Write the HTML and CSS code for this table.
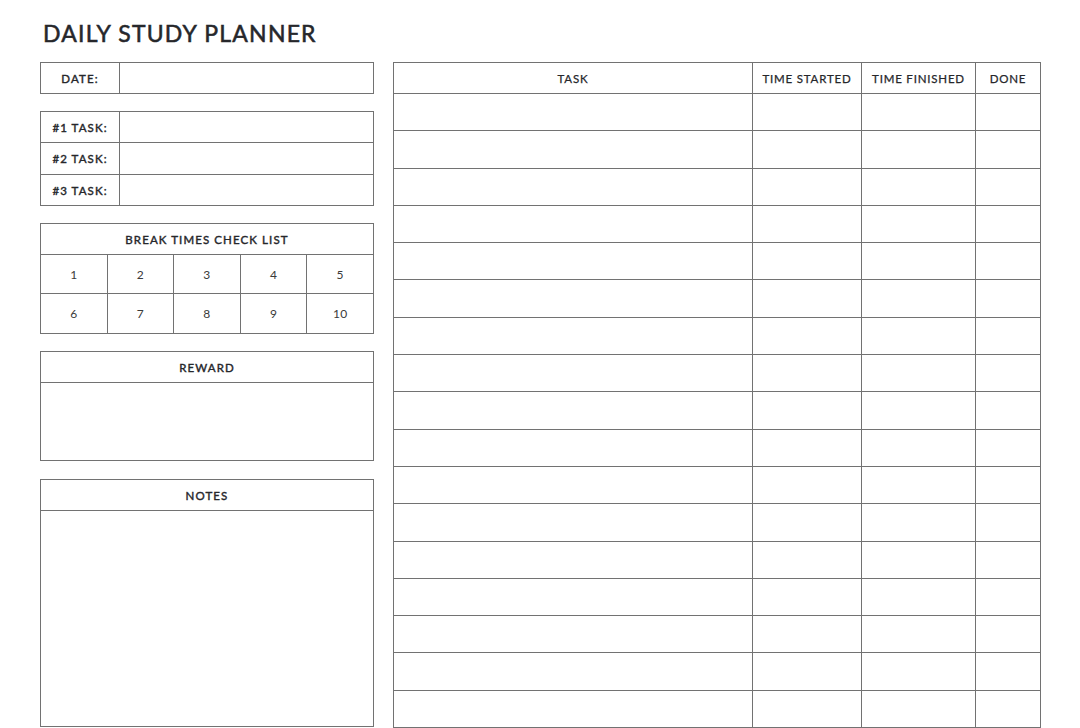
FILE: index.html
```html
<!DOCTYPE html>
<html>
<head>
<meta charset="utf-8">
<link rel="stylesheet" href="styles.css">
</head>
<body>
<div class="page">
  <div class="left">
    <h1 class="title">DAILY STUDY PLANNER</h1>
    <div class="grid date-box">
      <div class="cell label">DATE:</div>
      <div class="cell"></div>
    </div>
    <div class="grid tasks-box">
      <div class="cell label">#1 TASK:</div><div class="cell"></div>
      <div class="cell label">#2 TASK:</div><div class="cell"></div>
      <div class="cell label">#3 TASK:</div><div class="cell"></div>
    </div>
    <div class="grid break-box">
      <div class="cell label span5">BREAK TIMES CHECK LIST</div>
      <div class="cell num">1</div><div class="cell num">2</div><div class="cell num">3</div><div class="cell num">4</div><div class="cell num">5</div>
      <div class="cell num">6</div><div class="cell num">7</div><div class="cell num">8</div><div class="cell num">9</div><div class="cell num">10</div>
    </div>
    <div class="grid reward-box">
      <div class="cell label">REWARD</div>
      <div class="cell"></div>
    </div>
    <div class="grid notes-box">
      <div class="cell label">NOTES</div>
      <div class="cell"></div>
    </div>
  </div>
  <div class="grid main-table">
    <div class="cell label">TASK</div><div class="cell label">TIME STARTED</div><div class="cell label">TIME FINISHED</div><div class="cell label">DONE</div>
    <div class="cell"></div><div class="cell"></div><div class="cell"></div><div class="cell"></div>
    <div class="cell"></div><div class="cell"></div><div class="cell"></div><div class="cell"></div>
    <div class="cell"></div><div class="cell"></div><div class="cell"></div><div class="cell"></div>
    <div class="cell"></div><div class="cell"></div><div class="cell"></div><div class="cell"></div>
    <div class="cell"></div><div class="cell"></div><div class="cell"></div><div class="cell"></div>
    <div class="cell"></div><div class="cell"></div><div class="cell"></div><div class="cell"></div>
    <div class="cell"></div><div class="cell"></div><div class="cell"></div><div class="cell"></div>
    <div class="cell"></div><div class="cell"></div><div class="cell"></div><div class="cell"></div>
    <div class="cell"></div><div class="cell"></div><div class="cell"></div><div class="cell"></div>
    <div class="cell"></div><div class="cell"></div><div class="cell"></div><div class="cell"></div>
    <div class="cell"></div><div class="cell"></div><div class="cell"></div><div class="cell"></div>
    <div class="cell"></div><div class="cell"></div><div class="cell"></div><div class="cell"></div>
    <div class="cell"></div><div class="cell"></div><div class="cell"></div><div class="cell"></div>
    <div class="cell"></div><div class="cell"></div><div class="cell"></div><div class="cell"></div>
    <div class="cell"></div><div class="cell"></div><div class="cell"></div><div class="cell"></div>
    <div class="cell"></div><div class="cell"></div><div class="cell"></div><div class="cell"></div>
    <div class="cell"></div><div class="cell"></div><div class="cell"></div><div class="cell"></div>
  </div>
</div>
</body>
</html>
```
FILE: styles.css
```css
html, body {
  margin: 0;
  padding: 0;
  background: #fff;
  overflow: hidden;
}
body {
  font-family: "Lato", "Liberation Sans", sans-serif;
  color: #26272b;
}
.page {
  display: flex;
  align-items: flex-start;
  gap: 19px;
  padding-left: 40px;
  height: 728px;
}
.left {
  display: flex;
  flex-direction: column;
  gap: 17px;
  width: 334px;
}
.title {
  margin: 0;
  height: 46px;
  padding: 19px 0 0 3px;
  box-sizing: border-box;
  font-size: 23px;
  font-weight: 400;
  -webkit-text-stroke: 0.55px #26272b;
  letter-spacing: 1.2px;
  line-height: 28px;
  color: #26272b;
  margin-bottom: -1px;
}
.grid {
  display: grid;
  background: #727272;
  padding: 1px;
  gap: 1px;
  box-sizing: border-box;
}
.cell {
  background: #fff;
  display: flex;
  align-items: center;
  justify-content: center;
}
.label {
  font-size: 11.5px;
  font-weight: 400;
  -webkit-text-stroke: 0.4px #26272b;
  letter-spacing: 1.1px;
  color: #26272b;
}
.num {
  font-size: 12px;
  font-weight: 400;
  color: #3a3a3a;
  letter-spacing: 0.3px;
}
.date-box {
  grid-template-columns: 78px 1fr;
  grid-template-rows: 30px;
}
.tasks-box {
  grid-template-columns: 78px 1fr;
  grid-template-rows: 30px 31px 30px;
}
.break-box {
  grid-template-columns: repeat(5, 1fr);
  grid-template-rows: 30px 38px 39px;
}
.span5 {
  grid-column: span 5;
}
.reward-box {
  grid-template-rows: 30px 77px;
}
.notes-box {
  margin-top: 1px;
  grid-template-rows: 30px 215px;
}
.main-table {
  margin-top: 62px;
  width: 648px;
  height: 666px;
  grid-template-columns: 358px 108px 113px 64px;
  grid-template-rows: 30px repeat(17, 1fr);
}
.main-table .label {
  letter-spacing: 0.8px;
  -webkit-text-stroke: 0.25px #26272b;
}
```
